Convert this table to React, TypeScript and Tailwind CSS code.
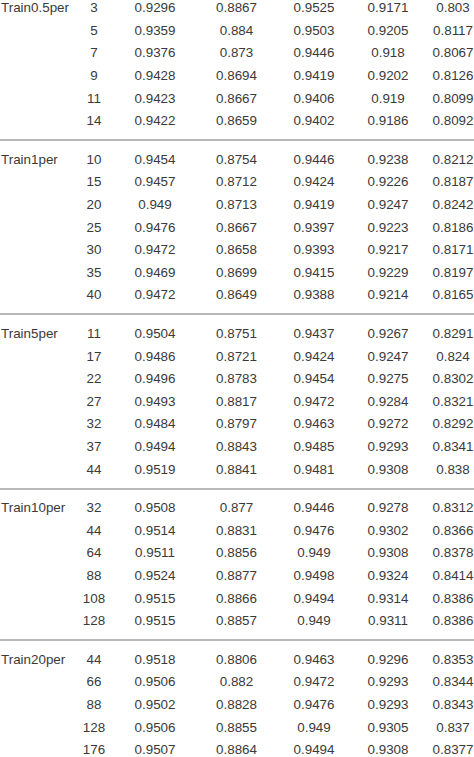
import React from 'react';

type Group = { name: string; rows: string[][] };

const groups: Group[] = [
  {
    name: 'Train0.5per',
    rows: [
      ['3', '0.9296', '0.8867', '0.9525', '0.9171', '0.803'],
      ['5', '0.9359', '0.884', '0.9503', '0.9205', '0.8117'],
      ['7', '0.9376', '0.873', '0.9446', '0.918', '0.8067'],
      ['9', '0.9428', '0.8694', '0.9419', '0.9202', '0.8126'],
      ['11', '0.9423', '0.8667', '0.9406', '0.919', '0.8099'],
      ['14', '0.9422', '0.8659', '0.9402', '0.9186', '0.8092'],
    ],
  },
  {
    name: 'Train1per',
    rows: [
      ['10', '0.9454', '0.8754', '0.9446', '0.9238', '0.8212'],
      ['15', '0.9457', '0.8712', '0.9424', '0.9226', '0.8187'],
      ['20', '0.949', '0.8713', '0.9419', '0.9247', '0.8242'],
      ['25', '0.9476', '0.8667', '0.9397', '0.9223', '0.8186'],
      ['30', '0.9472', '0.8658', '0.9393', '0.9217', '0.8171'],
      ['35', '0.9469', '0.8699', '0.9415', '0.9229', '0.8197'],
      ['40', '0.9472', '0.8649', '0.9388', '0.9214', '0.8165'],
    ],
  },
  {
    name: 'Train5per',
    rows: [
      ['11', '0.9504', '0.8751', '0.9437', '0.9267', '0.8291'],
      ['17', '0.9486', '0.8721', '0.9424', '0.9247', '0.824'],
      ['22', '0.9496', '0.8783', '0.9454', '0.9275', '0.8302'],
      ['27', '0.9493', '0.8817', '0.9472', '0.9284', '0.8321'],
      ['32', '0.9484', '0.8797', '0.9463', '0.9272', '0.8292'],
      ['37', '0.9494', '0.8843', '0.9485', '0.9293', '0.8341'],
      ['44', '0.9519', '0.8841', '0.9481', '0.9308', '0.838'],
    ],
  },
  {
    name: 'Train10per',
    rows: [
      ['32', '0.9508', '0.877', '0.9446', '0.9278', '0.8312'],
      ['44', '0.9514', '0.8831', '0.9476', '0.9302', '0.8366'],
      ['64', '0.9511', '0.8856', '0.949', '0.9308', '0.8378'],
      ['88', '0.9524', '0.8877', '0.9498', '0.9324', '0.8414'],
      ['108', '0.9515', '0.8866', '0.9494', '0.9314', '0.8386'],
      ['128', '0.9515', '0.8857', '0.949', '0.9311', '0.8386'],
    ],
  },
  {
    name: 'Train20per',
    rows: [
      ['44', '0.9518', '0.8806', '0.9463', '0.9296', '0.8353'],
      ['66', '0.9506', '0.882', '0.9472', '0.9293', '0.8344'],
      ['88', '0.9502', '0.8828', '0.9476', '0.9293', '0.8343'],
      ['128', '0.9506', '0.8855', '0.949', '0.9305', '0.837'],
      ['176', '0.9507', '0.8864', '0.9494', '0.9308', '0.8377'],
    ],
  },
];

export default function App() {
  return (
    <div className="w-[474px] h-[757px] overflow-hidden bg-white text-[#3a3a3a] text-[13.4px] font-['Liberation_Sans',Arial,sans-serif]">
      <div className="w-[477px] -mt-[3.3px]">
        {groups.map((g, gi) => (
          <div
            key={g.name}
            className={gi === 0 ? 'pb-[7px]' : 'border-t-2 border-[#b8b8b8] py-[7px]'}
          >
            {g.rows.map((r, ri) => (
              <div
                key={ri}
                className="grid grid-cols-[70px_48px_74px_89px_66px_82px_48px] h-[22.6px] items-center leading-none"
              >
                <div className="pl-[1px] whitespace-nowrap">{ri === 0 ? g.name : ''}</div>
                {r.map((v, ci) => (
                  <div key={ci} className="text-center whitespace-nowrap">
                    {v}
                  </div>
                ))}
              </div>
            ))}
          </div>
        ))}
      </div>
    </div>
  );
}
